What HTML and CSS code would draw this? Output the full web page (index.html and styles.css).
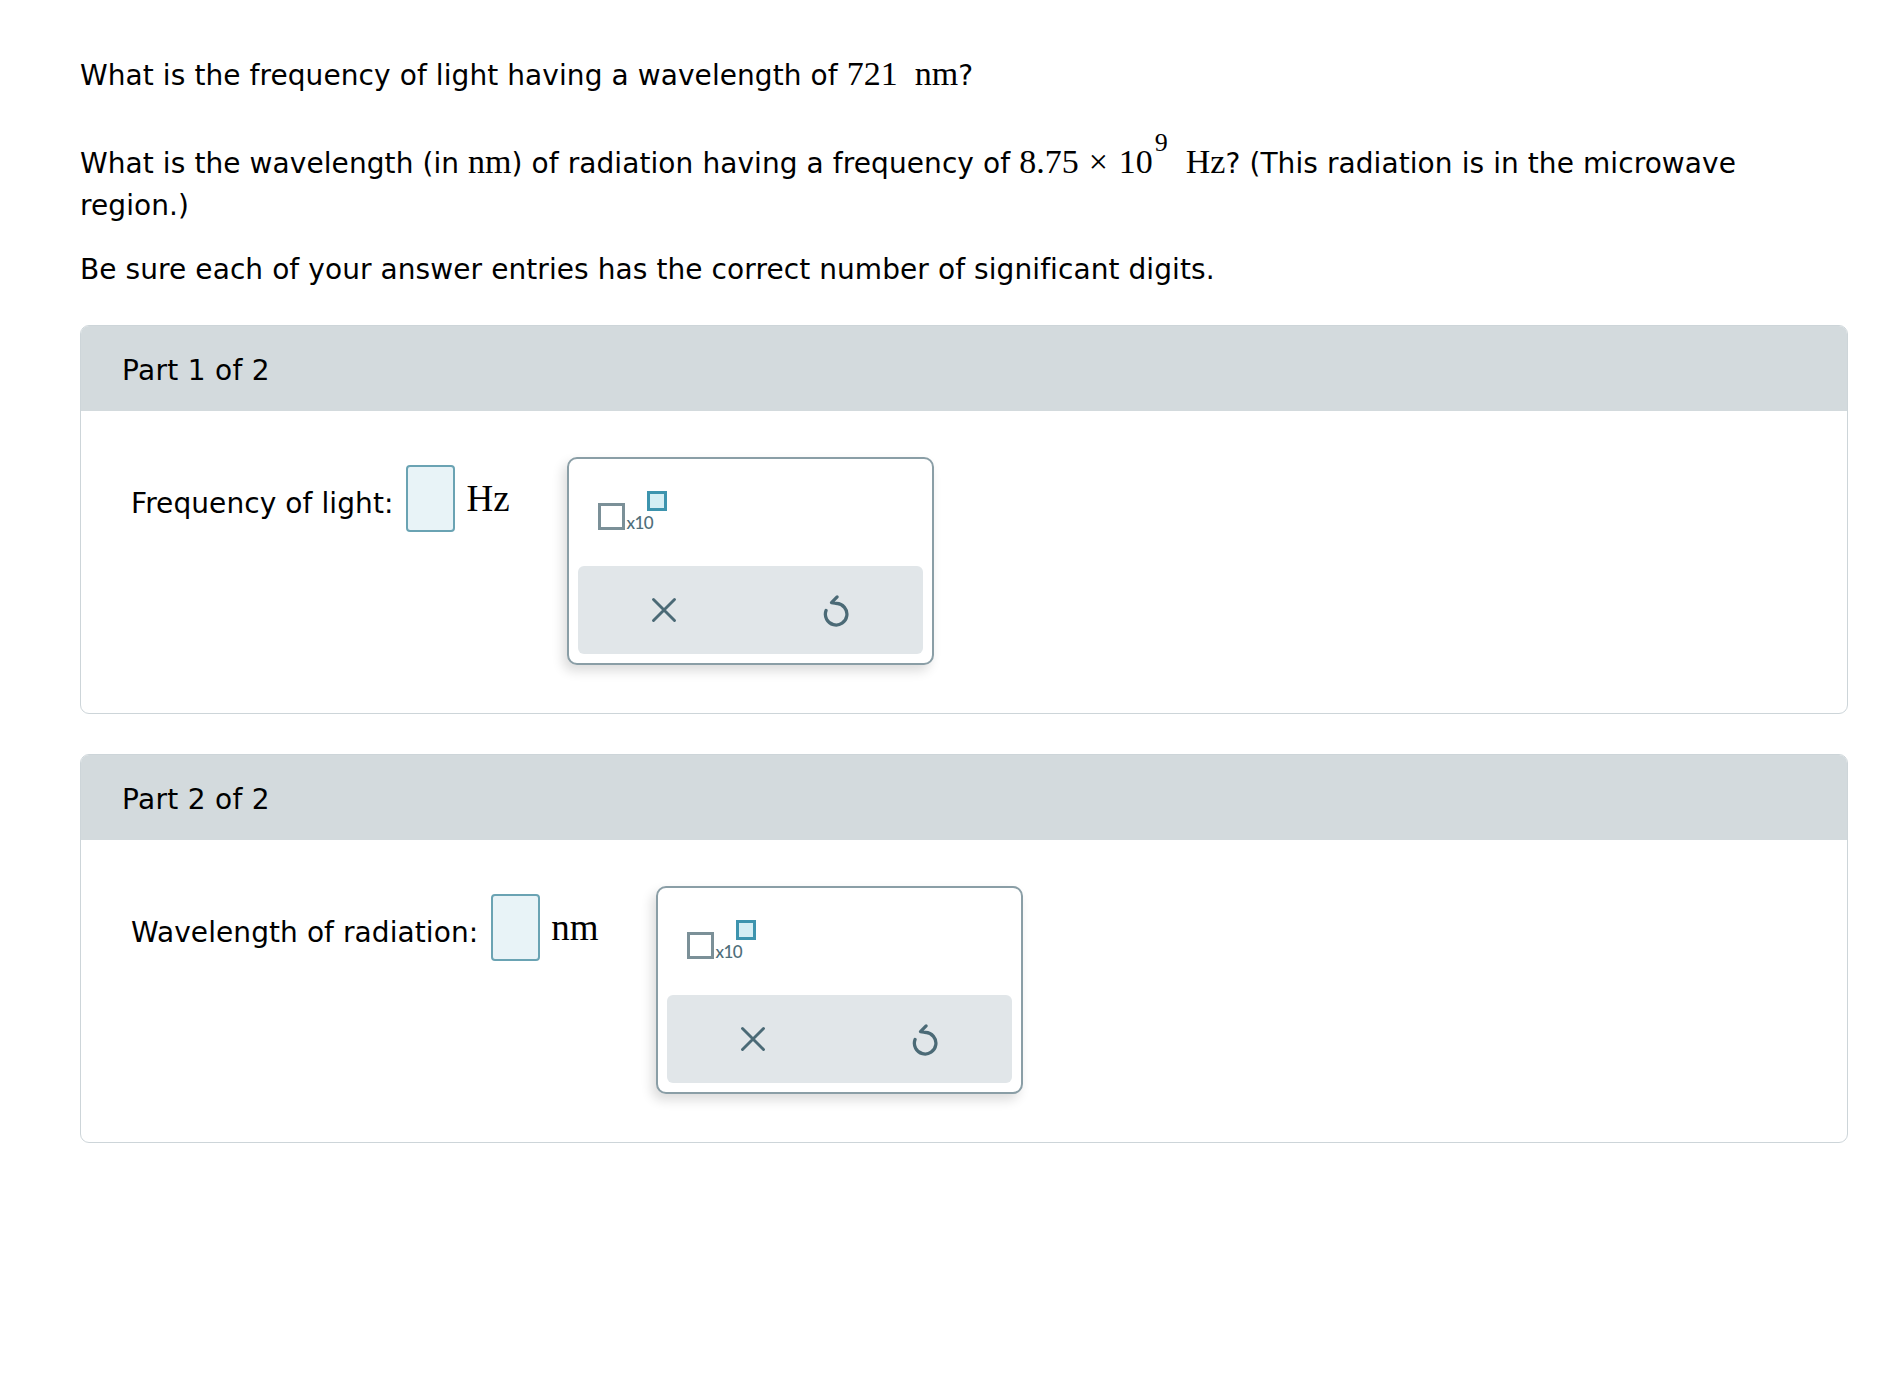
FILE: index.html
```html
<!DOCTYPE html>
<html lang="en">
<head>
<meta charset="utf-8">
<title>Frequency and wavelength</title>
<link rel="stylesheet" href="styles.css">
</head>
<body>
<main class="page">
  <p class="q q1">What is the frequency of light having a wavelength of <span class="math">721&nbsp;&nbsp;nm</span>?</p>
  <p class="q q2">What is the wavelength (in <span class="math">nm</span>) of radiation having a frequency of <span class="math">8.75<span class="op">×</span>10<span class="sup">9</span><span class="unitgap"></span>Hz</span>? (This radiation is in the microwave region.)</p>
  <p class="q q3">Be sure each of your answer entries has the correct number of significant digits.</p>

  <section class="part">
    <header class="part-head">Part 1 of 2</header>
    <div class="part-body">
      <div class="row">
        <span class="label">Frequency of light:</span>
        <span class="answer"></span>
        <span class="unit">Hz</span>
        <div class="popup">
          <div class="tpl-area">
            <div class="tpl">
              <span class="tpl-base"></span>
              <span class="tpl-x">x10</span>
              <span class="tpl-sup"></span>
            </div>
          </div>
          <div class="actions">
            <button class="act" type="button" aria-label="Clear">
              <svg viewBox="0 0 24 24" width="28" height="28"><path d="M3 3 L21 21 M21 3 L3 21" fill="none" stroke="#4b6a76" stroke-width="2.5" stroke-linecap="round"/></svg>
            </button>
            <button class="act" type="button" aria-label="Undo">
              <svg viewBox="0 0 24 24" width="34" height="34"><path d="M12.4 7.4 A7.6 7.6 0 1 1 5.0 12.3" fill="none" stroke="#4b6a76" stroke-width="2.3" stroke-linecap="round"/><path d="M12.8 2.8 L8.8 6.8 L12.4 7.4" fill="none" stroke="#4b6a76" stroke-width="2.3" stroke-linecap="round" stroke-linejoin="round"/></svg>
            </button>
          </div>
        </div>
      </div>
    </div>
  </section>

  <section class="part">
    <header class="part-head">Part 2 of 2</header>
    <div class="part-body">
      <div class="row">
        <span class="label">Wavelength of radiation:</span>
        <span class="answer"></span>
        <span class="unit">nm</span>
        <div class="popup">
          <div class="tpl-area">
            <div class="tpl">
              <span class="tpl-base"></span>
              <span class="tpl-x">x10</span>
              <span class="tpl-sup"></span>
            </div>
          </div>
          <div class="actions">
            <button class="act" type="button" aria-label="Clear">
              <svg viewBox="0 0 24 24" width="28" height="28"><path d="M3 3 L21 21 M21 3 L3 21" fill="none" stroke="#4b6a76" stroke-width="2.5" stroke-linecap="round"/></svg>
            </button>
            <button class="act" type="button" aria-label="Undo">
              <svg viewBox="0 0 24 24" width="34" height="34"><path d="M12.4 7.4 A7.6 7.6 0 1 1 5.0 12.3" fill="none" stroke="#4b6a76" stroke-width="2.3" stroke-linecap="round"/><path d="M12.8 2.8 L8.8 6.8 L12.4 7.4" fill="none" stroke="#4b6a76" stroke-width="2.3" stroke-linecap="round" stroke-linejoin="round"/></svg>
            </button>
          </div>
        </div>
      </div>
    </div>
  </section>
</main>
</body>
</html>
```
FILE: styles.css
```css
html, body {
  margin: 0;
  padding: 0;
  background: #ffffff;
}

body {
  font-family: "DejaVu Sans", Verdana, sans-serif;
  font-size: 28px;
  letter-spacing: 0.08px;
  color: #000000;
}

.page {
  padding: 0 38px 0 80px;
}

.q {
  margin: 0;
  line-height: 42px;
}

.q1 {
  padding-top: 53px;
}

.q2 {
  margin-top: 44px;
  padding-right: 60px;
}

.q3 {
  margin-top: 22px;
}

.math {
  font-family: "Liberation Serif", "Times New Roman", serif;
  font-size: 34px;
  letter-spacing: 0;
}

.op {
  margin: 0 11px 0 10px;
}

.sup {
  font-size: 26px;
  line-height: 0;
  margin-left: 2px;
  vertical-align: 22px;
}

.unitgap {
  display: inline-block;
  width: 18px;
}

.part {
  border: 1px solid #cdd5d9;
  border-radius: 9px;
}

.q3 + .part {
  margin-top: 34px;
}

.part + .part {
  margin-top: 40px;
}

.part-head {
  height: 85px;
  display: flex;
  align-items: center;
  padding: 4px 0 0 41px;
  box-sizing: border-box;
  background: #d3dadd;
  border-radius: 8px 8px 0 0;
  line-height: 42px;
  letter-spacing: 0.3px;
}

.part-body {
  padding: 46px 0 48px 50px;
}

.row {
  display: flex;
  align-items: flex-start;
}

.label {
  margin-top: 26px;
  line-height: 42px;
  white-space: nowrap;
}

.answer {
  width: 49px;
  height: 67px;
  box-sizing: border-box;
  margin: 8px 0 0 13px;
  border: 2px solid #6aa3b3;
  border-radius: 4px;
  background: #e8f3f7;
}

.unit {
  font-family: "Liberation Serif", "Times New Roman", serif;
  font-size: 37px;
  letter-spacing: 0;
  line-height: 42px;
  margin: 21px 0 0 11px;
}

.popup {
  margin-left: 57px;
  width: 367px;
  height: 208px;
  box-sizing: border-box;
  border: 2px solid #8a9ea6;
  border-radius: 10px;
  background: #ffffff;
  padding: 9px;
  display: flex;
  flex-direction: column;
  box-shadow: -4px 6px 12px rgba(0, 0, 0, 0.14);
}

.tpl-area {
  height: 98px;
  padding: 23px 0 0 20px;
  box-sizing: border-box;
}

.tpl {
  display: flex;
  align-items: flex-end;
  height: 39px;
}

.tpl-base {
  width: 27px;
  height: 27px;
  box-sizing: border-box;
  border: 3px solid #7b9098;
  background: #ffffff;
}

.tpl-x {
  font-family: "Lato", "Open Sans", sans-serif;
  font-size: 17px;
  font-weight: 500;
  line-height: 17px;
  color: #4f6e7a;
  letter-spacing: -0.6px;
  margin: 0 0 -1px 2px;
}

.tpl-sup {
  align-self: flex-start;
  width: 20px;
  height: 20px;
  box-sizing: border-box;
  border: 3px solid #3d94ae;
  background: #d4eef4;
  margin-left: -6px;
}

.actions {
  flex: 1;
  display: flex;
  background: #e1e6e9;
  border-radius: 6px;
}

.act {
  flex: 1;
  border: 0;
  background: transparent;
  padding: 0;
  display: flex;
  align-items: center;
  justify-content: center;
  cursor: pointer;
}

.act svg {
  display: block;
}
```
